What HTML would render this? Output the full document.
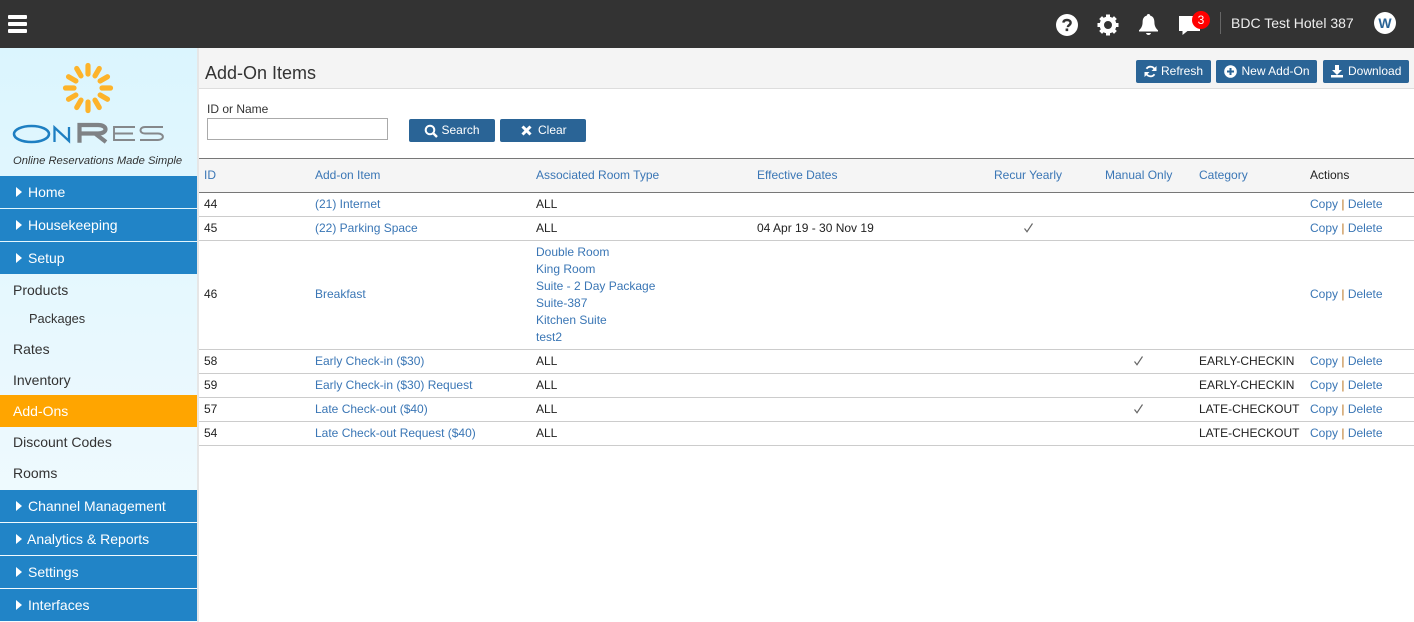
<!DOCTYPE html>
<html><head><meta charset="utf-8"><style>
html,body{margin:0;padding:0;width:1414px;height:622px;overflow:hidden;background:#fff;font-family:"Liberation Sans",sans-serif;font-size:12px;color:#222}
div{position:absolute}
.t{white-space:nowrap;line-height:17px;height:17px}
.l{color:#3a76b5}
.n{left:0;width:197px;height:32px;background:#2184c7;color:#fff;font-size:14px;line-height:32px;white-space:nowrap}
.n b{font-weight:normal;position:absolute;left:28px;top:0}
.n i{position:absolute;left:16px;top:11px;width:0;height:0;border-left:6px solid #fff;border-top:5px solid transparent;border-bottom:5px solid transparent}
.s{left:13px;font-size:14px;color:#333;line-height:20px;white-space:nowrap}
.hr{left:199px;width:1215px;height:1px;background:#ccc}
.btn{background:#2a6496;border-radius:2px;color:#fff;height:23px;line-height:22px;white-space:nowrap}
.btn span{position:absolute;top:0}
.btn svg{position:absolute}
.p{color:#b8701a}
.ck{position:absolute}
</style></head><body>
<div style="left:0;top:0;width:1414px;height:48px;background:#333"></div>
<div style="left:8px;top:15px;width:19px;height:4px;background:#fff;border-radius:1px"></div>
<div style="left:8px;top:22px;width:19px;height:4px;background:#fff;border-radius:1px"></div>
<div style="left:8px;top:29px;width:19px;height:4px;background:#fff;border-radius:1px"></div>

<svg style="position:absolute;left:1055px;top:13px" width="24" height="24" viewBox="0 0 24 24"><circle cx="12" cy="12" r="11" fill="#fff"/><path d="M8.400 9.600C8.600 7.800 10 7 12 7c2 0 3.600 1 3.600 2.700 0 2.400-2.800 2.500-2.800 4.400" fill="none" stroke="#333" stroke-width="2.400"/><rect x="10.600" y="15.500" width="2.600" height="2.600" fill="#333"/></svg>
<svg style="position:absolute;left:1097px;top:14px" width="22" height="22" viewBox="0 0 22 22"><circle cx="11" cy="11" r="6.200" fill="none" stroke="#fff" stroke-width="4.400"/><g stroke="#fff" stroke-width="4"><path d="M11 0.500v4M11 17.500v4M0.500 11h4M17.500 11h4M3.600 3.600l2.800 2.800M15.600 15.600l2.800 2.800M3.600 18.400l2.800-2.800M15.600 6.400l2.800-2.800"/></g></svg>
<svg style="position:absolute;left:1138px;top:13px" width="21" height="23" viewBox="0 0 21 23"><path d="M10.500 1c1 0 1.700.7 1.700 1.600 3 .7 4.200 3.300 4.200 6.400 0 4 1.300 6 3.600 8.300v1.200H1v-1.200C3.300 15 4.600 13 4.600 9c0-3.100 1.200-5.700 4.200-6.400C8.800 1.700 9.500 1 10.500 1z" fill="#fff"/><path d="M8 20h5c-.4 1.400-1.300 2-2.500 2S8.400 21.400 8 20z" fill="#fff"/></svg>
<svg style="position:absolute;left:1179px;top:15px" width="22" height="20" viewBox="0 0 22 20"><path d="M0 1h21v15H8.500L3.500 20v-4H0z" fill="#fff"/></svg>
<div style="left:1192px;top:11px;width:18px;height:18px;border-radius:9px;background:#f00;color:#fff;font-size:12px;line-height:18px;text-align:center">3</div>
<div style="left:1220px;top:12px;width:1px;height:22px;background:#666"></div>
<div class="t" style="left:1231px;top:15px;color:#eee;font-size:14px">BDC Test Hotel 387</div>
<div style="left:1374px;top:12px;width:22px;height:22px;border-radius:11px;background:#fff;color:#2a6496;font-weight:bold;font-size:14px;line-height:22px;text-align:center">W</div>

<div style="left:0;top:48px;width:197px;height:574px;background:linear-gradient(#dbf5fe,#f4fbfe)"></div>
<div style="left:197px;top:48px;width:2px;height:574px;background:#e6e6e6"></div>
<svg style="position:absolute;left:58px;top:58px" width="60" height="60" viewBox="-30 -30 60 60"><g stroke="#fdb32a" stroke-width="5.200" stroke-linecap="round"><path id="r" d="M0 -14V-22.500"/><path d="M0 -14V-22.500" transform="rotate(30)"/><path d="M0 -14V-22.500" transform="rotate(60)"/><path d="M0 -14V-22.500" transform="rotate(90)"/><path d="M0 -14V-22.500" transform="rotate(120)"/><path d="M0 -14V-22.500" transform="rotate(150)"/><path d="M0 -14V-22.500" transform="rotate(180)"/><path d="M0 -14V-22.500" transform="rotate(210)"/><path d="M0 -14V-22.500" transform="rotate(240)"/><path d="M0 -14V-22.500" transform="rotate(270)"/><path d="M0 -14V-22.500" transform="rotate(300)"/><path d="M0 -14V-22.500" transform="rotate(330)"/></g></svg>
<svg style="position:absolute;left:0;top:118px" width="197" height="30" viewBox="0 0 197 30">
<ellipse cx="31.500" cy="16" rx="17.500" ry="8" fill="none" stroke="#1e7fc2" stroke-width="2.600"/>
<path d="M54.500 24V9.500L69 23V9" fill="none" stroke="#1e7fc2" stroke-width="2.300"/>
<path d="M79.500 24.700V7H98C108 7 108 15.500 98 15.500H80M95 15.500L106 24" fill="none" stroke="#7f8285" stroke-width="4.200"/>
<path d="M135 9H114V22H135M114 15.500H133" fill="none" stroke="#85888b" stroke-width="1.900"/>
<path d="M163 9H145C139 9 139 15.500 145 15.500H158C164.500 15.500 164.500 22 158 22H140" fill="none" stroke="#85888b" stroke-width="2"/>
</svg>
<div class="t" style="left:13px;top:153px;font-size:11.200px;font-style:italic;color:#333">Online Reservations Made Simple</div>

<div class="n" style="top:176px"><i></i><b>Home</b></div>
<div class="n" style="top:209px"><i></i><b>Housekeeping</b></div>
<div class="n" style="top:242px"><i></i><b>Setup</b></div>
<div class="s" style="top:280px">Products</div>
<div class="s" style="top:309px;left:29px;font-size:12.800px">Packages</div>
<div class="s" style="top:339px">Rates</div>
<div class="s" style="top:370px">Inventory</div>
<div style="left:0;top:395px;width:197px;height:32px;background:#ffa500"></div>
<div class="s" style="top:401px;color:#fff">Add-Ons</div>
<div class="s" style="top:432px">Discount Codes</div>
<div class="s" style="top:463px">Rooms</div>
<div class="n" style="top:490px"><i></i><b>Channel Management</b></div>
<div class="n" style="top:523px"><i></i><b style="left:27px">Analytics &amp; Reports</b></div>
<div class="n" style="top:556px"><i></i><b>Settings</b></div>
<div class="n" style="top:589px"><i></i><b>Interfaces</b></div>

<div style="left:199px;top:48px;width:1215px;height:40px;background:#f4f4f4"></div>
<div style="left:199px;top:88px;width:1215px;height:1px;background:#ddd"></div>
<div class="t" style="left:205px;top:64px;font-size:18px;line-height:18px;height:18px;color:#333">Add-On Items</div>

<div class="btn" style="left:1136px;top:60px;width:75px">
<svg style="left:8px;top:5px" width="13" height="13" viewBox="0 0 13 13"><path d="M11 5A4.800 4.800 0 0 0 2.500 3.800M2 8a4.800 4.800 0 0 0 8.500 1.200" fill="none" stroke="#fff" stroke-width="1.800"/><path d="M12.500 1v5h-5zM.5 12V7h5z" fill="#fff"/></svg>
<span style="left:25px">Refresh</span></div>
<div class="btn" style="left:1216px;top:60px;width:101px">
<svg style="left:8px;top:5px" width="13" height="13" viewBox="0 0 13 13"><circle cx="6.500" cy="6.500" r="6.300" fill="#fff"/><path d="M6.500 3v7M3 6.500h7" stroke="#2a6496" stroke-width="2"/></svg>
<span style="left:25.500px">New Add-On</span></div>
<div class="btn" style="left:1323px;top:60px;width:86px">
<svg style="left:7px;top:4px" width="14" height="14" viewBox="0 0 14 14"><path d="M5 1h4v5h3L7 11 2 6h3z" fill="#fff"/><rect x="1" y="11" width="12" height="2.500" fill="#fff"/></svg>
<span style="left:25px">Download</span></div>

<div class="t" style="left:207px;top:101px;color:#333">ID or Name</div>
<div style="left:207px;top:118px;width:179px;height:20px;border:1px solid #aaa;background:#fff"></div>
<div class="btn" style="left:409px;top:119px;width:86px">
<svg style="left:15px;top:5px" width="14" height="14" viewBox="0 0 14 14"><circle cx="6" cy="6" r="4.300" fill="none" stroke="#fff" stroke-width="2"/><path d="M9 9l4 4" stroke="#fff" stroke-width="2.400"/></svg>
<span style="left:32.500px">Search</span></div>
<div class="btn" style="left:500px;top:119px;width:86px">
<svg style="left:21px;top:6px" width="11" height="11" viewBox="0 0 11 11"><path d="M1.500 1.500l8 8M9.500 1.500l-8 8" stroke="#fff" stroke-width="3"/></svg>
<span style="left:38px">Clear</span></div>

<div style="left:199px;top:158px;width:1215px;height:34px;background:#f5f5f5"></div>
<div style="left:199px;top:158px;width:1215px;height:1px;background:#777"></div>
<div style="left:199px;top:192px;width:1215px;height:1px;background:#777"></div>
<div class="t l" style="left:204px;top:167px">ID</div>
<div class="t l" style="left:315px;top:167px">Add-on Item</div>
<div class="t l" style="left:536px;top:167px">Associated Room Type</div>
<div class="t l" style="left:757px;top:167px">Effective Dates</div>
<div class="t l" style="left:994px;top:167px">Recur Yearly</div>
<div class="t l" style="left:1105px;top:167px">Manual Only</div>
<div class="t l" style="left:1199px;top:167px">Category</div>
<div class="t" style="left:1310px;top:167px">Actions</div>

<div class="hr" style="top:216px"></div><div class="hr" style="top:240px"></div><div class="hr" style="top:349px"></div><div class="hr" style="top:373px"></div><div class="hr" style="top:397px"></div><div class="hr" style="top:421px"></div><div class="hr" style="top:445px"></div>

<div class="t" style="left:204px;top:196px">44</div><div class="t l" style="left:315px;top:196px">(21) Internet</div><div class="t" style="left:536px;top:196px">ALL</div>
<div class="t" style="left:1310px;top:196px"><span class="l">Copy</span> <span class="p">|</span> <span class="l">Delete</span></div>

<div class="t" style="left:204px;top:220px">45</div><div class="t l" style="left:315px;top:220px">(22) Parking Space</div><div class="t" style="left:536px;top:220px">ALL</div>
<div class="t" style="left:757px;top:220px">04 Apr 19 - 30 Nov 19</div>
<svg class="ck" style="left:1024px;top:223px" width="9" height="10" viewBox="0 0 9 10"><path d="M.5 5.500L3 8.700 8.500.5" fill="none" stroke="#666" stroke-width="1.200"/></svg>
<div class="t" style="left:1310px;top:220px"><span class="l">Copy</span> <span class="p">|</span> <span class="l">Delete</span></div>

<div class="t" style="left:204px;top:286px">46</div><div class="t l" style="left:315px;top:286px">Breakfast</div>
<div class="t l" style="left:536px;top:244px">Double Room</div><div class="t l" style="left:536px;top:261px">King Room</div><div class="t l" style="left:536px;top:278px">Suite - 2 Day Package</div><div class="t l" style="left:536px;top:295px">Suite-387</div><div class="t l" style="left:536px;top:312px">Kitchen Suite</div><div class="t l" style="left:536px;top:329px">test2</div>
<div class="t" style="left:1310px;top:286px"><span class="l">Copy</span> <span class="p">|</span> <span class="l">Delete</span></div>

<div class="t" style="left:204px;top:353px">58</div><div class="t l" style="left:315px;top:353px">Early Check-in ($30)</div><div class="t" style="left:536px;top:353px">ALL</div>
<svg class="ck" style="left:1134px;top:356px" width="9" height="10" viewBox="0 0 9 10"><path d="M.5 5.500L3 8.700 8.500.5" fill="none" stroke="#666" stroke-width="1.200"/></svg>
<div class="t" style="left:1199px;top:353px">EARLY-CHECKIN</div>
<div class="t" style="left:1310px;top:353px"><span class="l">Copy</span> <span class="p">|</span> <span class="l">Delete</span></div>

<div class="t" style="left:204px;top:377px">59</div><div class="t l" style="left:315px;top:377px">Early Check-in ($30) Request</div><div class="t" style="left:536px;top:377px">ALL</div>
<div class="t" style="left:1199px;top:377px">EARLY-CHECKIN</div>
<div class="t" style="left:1310px;top:377px"><span class="l">Copy</span> <span class="p">|</span> <span class="l">Delete</span></div>

<div class="t" style="left:204px;top:401px">57</div><div class="t l" style="left:315px;top:401px">Late Check-out ($40)</div><div class="t" style="left:536px;top:401px">ALL</div>
<svg class="ck" style="left:1134px;top:404px" width="9" height="10" viewBox="0 0 9 10"><path d="M.5 5.500L3 8.700 8.500.5" fill="none" stroke="#666" stroke-width="1.200"/></svg>
<div class="t" style="left:1199px;top:401px">LATE-CHECKOUT</div>
<div class="t" style="left:1310px;top:401px"><span class="l">Copy</span> <span class="p">|</span> <span class="l">Delete</span></div>

<div class="t" style="left:204px;top:425px">54</div><div class="t l" style="left:315px;top:425px">Late Check-out Request ($40)</div><div class="t" style="left:536px;top:425px">ALL</div>
<div class="t" style="left:1199px;top:425px">LATE-CHECKOUT</div>
<div class="t" style="left:1310px;top:425px"><span class="l">Copy</span> <span class="p">|</span> <span class="l">Delete</span></div>
</body></html>
